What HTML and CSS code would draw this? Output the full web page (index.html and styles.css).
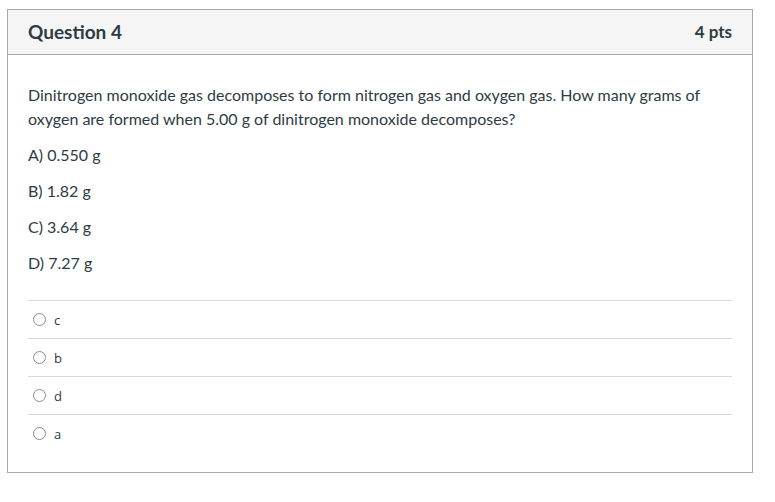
FILE: index.html
```html
<!DOCTYPE html>
<html>
<head>
<meta charset="utf-8">
<link rel="stylesheet" href="styles.css">
</head>
<body>
<div class="card">
  <div class="card-header">
    <span class="title">Question 4</span>
    <span class="pts">4 pts</span>
  </div>
  <div class="card-body">
    <p>Dinitrogen monoxide gas decomposes to form nitrogen gas and oxygen gas. How many grams of oxygen are formed when 5.00 g of dinitrogen monoxide decomposes?</p>
    <p>A) 0.550 g</p>
    <p>B) 1.82 g</p>
    <p>C) 3.64 g</p>
    <p>D) 7.27 g</p>
    <div class="answers">
      <label class="answer"><span class="radio"></span><span class="label">c</span></label>
      <label class="answer"><span class="radio"></span><span class="label">b</span></label>
      <label class="answer"><span class="radio"></span><span class="label">d</span></label>
      <label class="answer"><span class="radio"></span><span class="label">a</span></label>
    </div>
  </div>
</div>
</body>
</html>
```

FILE: styles.css
```css
html, body {
  margin: 0;
  padding: 0;
  background: #fff;
}
body {
  padding: 9px 0 0 7px;
  font-family: Lato, "Liberation Sans", sans-serif;
  color: #2d3b45;
}
.card {
  width: 744px;
  border: 1px solid #a9a9a9;
  box-sizing: content-box;
}
.card-header {
  height: 44px;
  background: #f5f5f5;
  border-bottom: 1px solid #a9a9a9;
  display: flex;
  align-items: center;
  justify-content: space-between;
  padding: 0 20px;
}
.title {
  font-size: 19px;
  font-weight: 700;
  margin-top: -2px;
}
.pts {
  font-size: 17px;
  font-weight: 700;
  margin-top: -2px;
}
.card-body {
  padding: 28px 20px 20px 20px;
}
.card-body p {
  margin: 0 0 12px 0;
  font-size: 16px;
  line-height: 24px;
}
.answers {
  margin-top: 25px;
}
.answer {
  display: flex;
  align-items: center;
  height: 37px;
  border-top: 1px solid #dadada;
  padding-left: 5px;
}
.radio {
  width: 11px;
  height: 11px;
  border: 1px solid #8e8e8e;
  border-radius: 50%;
  box-sizing: content-box;
  margin-right: 8px;
}
.label {
  font-family: "Open Sans", "Liberation Sans", sans-serif;
  font-size: 13px;
  color: #2d3b45;
}
```
